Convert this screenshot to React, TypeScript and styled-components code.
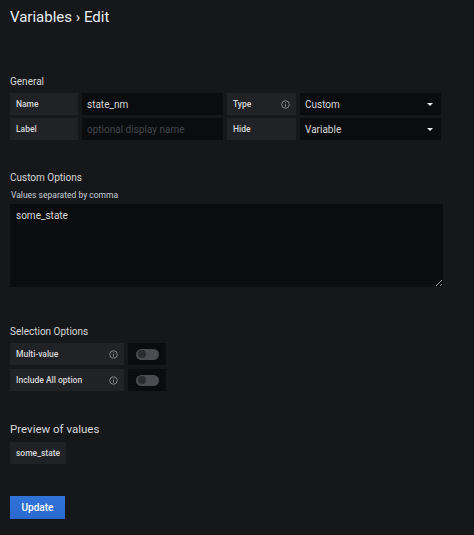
import React from "react";
import styled, { createGlobalStyle } from "styled-components";

const GlobalStyle = createGlobalStyle`
  html, body {
    margin: 0;
    padding: 0;
    background: #161719;
  }
  body {
    font-family: Roboto, "Liberation Sans", sans-serif;
    color: #d8d9da;
  }
`;

const Page = styled.div`
  min-height: 535px;
  box-sizing: border-box;
  padding: 8px 10px 0;
  display: flex;
  flex-direction: column;
`;

const Title = styled.h2`
  margin: 0;
  font-size: 15px;
  line-height: 19px;
  font-weight: 400;
  color: #e9edf2;
`;

const Section = styled.section<{ $top: number }>`
  margin-top: ${(p) => p.$top}px;
  display: flex;
  flex-direction: column;
`;

const SectionTitle = styled.h5<{ $size?: number }>`
  margin: 0 0 4px;
  font-size: ${(p) => p.$size ?? 10}px;
  line-height: ${(p) => (p.$size ?? 10) + 4}px;
  font-weight: 400;
  color: #d8d9da;
`;

const Rows = styled.div<{ $gap: number }>`
  display: flex;
  flex-direction: column;
  gap: ${(p) => p.$gap}px;
`;

const Row = styled.div`
  display: flex;
  gap: 4px;
  height: 22px;
`;

const Label = styled.div<{ $width: number }>`
  width: ${(p) => p.$width}px;
  flex: none;
  box-sizing: border-box;
  padding: 0 6px;
  background: #202226;
  display: flex;
  align-items: center;
  justify-content: space-between;
  font-size: 8.5px;
  font-weight: 500;
  color: #d8d9da;
`;

const Input = styled.input`
  width: 141px;
  box-sizing: border-box;
  border: none;
  outline: none;
  margin: 0;
  padding: 0 5px;
  background: #0b0c0e;
  color: #d8d9da;
  font-family: Roboto, "Liberation Sans", sans-serif;
  font-size: 10px;
  &::placeholder {
    color: #43464c;
  }
`;

const Select = styled.div`
  width: 141px;
  box-sizing: border-box;
  padding: 0 8px 0 5px;
  background: #0b0c0e;
  display: flex;
  align-items: center;
  justify-content: space-between;
  font-size: 10px;
  color: #d8d9da;
`;

const Caret = styled.span`
  width: 0;
  height: 0;
  border-left: 3px solid transparent;
  border-right: 3px solid transparent;
  border-top: 3px solid #e9edf2;
  margin-top: 1px;
`;

const Help = styled.div`
  font-size: 8.5px;
  line-height: 12px;
  color: #c7d0d9;
  margin: 0 0 3px 1px;
`;

const TextArea = styled.textarea`
  width: 433px;
  height: 83px;
  box-sizing: border-box;
  margin: 0;
  border: none;
  outline: none;
  resize: vertical;
  background: #0b0c0e;
  color: #d8d9da;
  padding: 5px 6px;
  font-family: Roboto, "Liberation Sans", sans-serif;
  font-size: 10px;
  line-height: 14px;
`;

const SwitchBox = styled.div`
  width: 38px;
  flex: none;
  background: #0b0c0e;
  display: flex;
  align-items: center;
  justify-content: center;
`;

const Pill = styled.span<{ $on?: boolean }>`
  width: 23px;
  height: 11px;
  border-radius: 6px;
  background: #4a4c51;
  display: flex;
  align-items: center;
  padding: 0 2px;
  box-sizing: border-box;
  justify-content: ${(p) => (p.$on ? "flex-end" : "flex-start")};
  &::after {
    content: "";
    width: 8px;
    height: 8px;
    border-radius: 50%;
    background: #2a2c30;
  }
`;

const Chip = styled.div`
  align-self: flex-start;
  height: 22px;
  padding: 0 6px;
  background: #202226;
  display: flex;
  align-items: center;
  font-size: 8.5px;
  font-weight: 500;
  color: #d8d9da;
`;

const Button = styled.button`
  align-self: flex-start;
  margin-top: 32px;
  width: 55px;
  height: 23px;
  border: none;
  padding: 0;
  background: linear-gradient(180deg, #3274d9 0%, #2a68cf 100%);
  color: #ffffff;
  font-family: Roboto, "Liberation Sans", sans-serif;
  font-size: 10px;
  font-weight: 500;
`;

const InfoIcon = () => (
  <svg width="9" height="9" viewBox="0 0 10 10" fill="none">
    <circle cx="5" cy="5" r="4.2" stroke="#8e9096" strokeWidth="1" />
    <circle cx="5" cy="3" r="0.6" fill="#8e9096" />
    <path d="M5 4.5V7.4" stroke="#8e9096" strokeWidth="1" />
  </svg>
);

const Switch = ({ label }: { label: string }) => (
  <Row>
    <Label $width={114}>
      {label}
      <InfoIcon />
    </Label>
    <SwitchBox>
      <Pill />
    </SwitchBox>
  </Row>
);

export default function App() {
  return (
    <>
      <GlobalStyle />
      <Page>
        <Title>Variables › Edit</Title>

        <Section $top={48}>
          <SectionTitle>General</SectionTitle>
          <Rows $gap={3}>
            <Row>
              <Label $width={68}>Name</Label>
              <Input defaultValue="state_nm" />
              <Label $width={69}>
                Type
                <InfoIcon />
              </Label>
              <Select>
                Custom
                <Caret />
              </Select>
            </Row>
            <Row>
              <Label $width={68}>Label</Label>
              <Input placeholder="optional display name" />
              <Label $width={69}>Hide</Label>
              <Select>
                Variable
                <Caret />
              </Select>
            </Row>
          </Rows>
        </Section>

        <Section $top={31}>
          <SectionTitle>Custom Options</SectionTitle>
          <Help>Values separated by comma</Help>
          <TextArea defaultValue="some_state" spellCheck={false} />
        </Section>

        <Section $top={38}>
          <SectionTitle>Selection Options</SectionTitle>
          <Rows $gap={4}>
            <Switch label="Multi-value" />
            <Switch label="Include All option" />
          </Rows>
        </Section>

        <Section $top={31}>
          <SectionTitle $size={11.5}>Preview of values</SectionTitle>
          <Chip>some_state</Chip>
        </Section>

        <Button>Update</Button>
      </Page>
    </>
  );
}
